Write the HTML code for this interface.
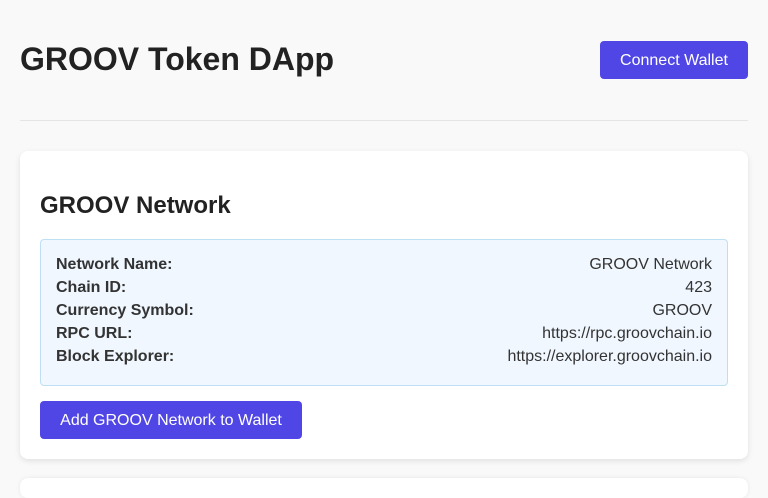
<!DOCTYPE html>
<html><head><style>
body{margin:0;background:#f9f9f9;font-family:"Liberation Sans",sans-serif;color:#222;width:768px;height:480px;overflow:hidden;position:relative}
h1{position:absolute;left:20px;top:40px;margin:0;font-size:32px;font-weight:bold;line-height:38px;color:#222}
.cw{position:absolute;left:600px;top:41px;width:148px;height:38px;background:#4f46e5;color:#fff;border-radius:4px;font-size:16px;line-height:39px;text-align:center}
.hr{position:absolute;left:20px;right:20px;top:120px;height:1px;background:#e5e5e5}
.card{position:absolute;left:20px;top:151px;width:728px;height:308px;background:#fff;border-radius:8px;box-shadow:0 2px 6px rgba(0,0,0,.1)}
h2{position:absolute;left:20px;top:40px;margin:0;font-size:24px;line-height:30px;font-weight:bold}
.box{position:absolute;left:20px;top:88px;width:686px;height:145px;background:#f0f7ff;border:1px solid #bde0f5;border-radius:4px}
.row{position:absolute;left:15px;right:15px;height:23px;font-size:16px;line-height:23px}
.row b{color:#333}.row span{float:right;color:#333}
.btn{position:absolute;left:20px;top:250px;width:262px;height:38px;background:#4f46e5;color:#fff;border-radius:4px;font-size:16px;line-height:39px;text-align:center}
.card2{position:absolute;left:20px;top:478px;width:728px;height:20px;background:#fff;border-radius:8px;box-shadow:0 0 4px rgba(0,0,0,.08)}
</style></head><body>
<h1>GROOV Token DApp</h1>
<div class="cw">Connect Wallet</div>
<div class="hr"></div>
<div class="card">
<h2>GROOV Network</h2>
<div class="box">
<div class="row" style="top:13px"><b>Network Name:</b><span>GROOV Network</span></div>
<div class="row" style="top:36px"><b>Chain ID:</b><span>423</span></div>
<div class="row" style="top:59px"><b>Currency Symbol:</b><span>GROOV</span></div>
<div class="row" style="top:82px"><b>RPC URL:</b><span>https://rpc.groovchain.io</span></div>
<div class="row" style="top:105px"><b>Block Explorer:</b><span>https://explorer.groovchain.io</span></div>
</div>
<div class="btn">Add GROOV Network to Wallet</div>
</div>
<div class="card2"></div>
</body></html>
